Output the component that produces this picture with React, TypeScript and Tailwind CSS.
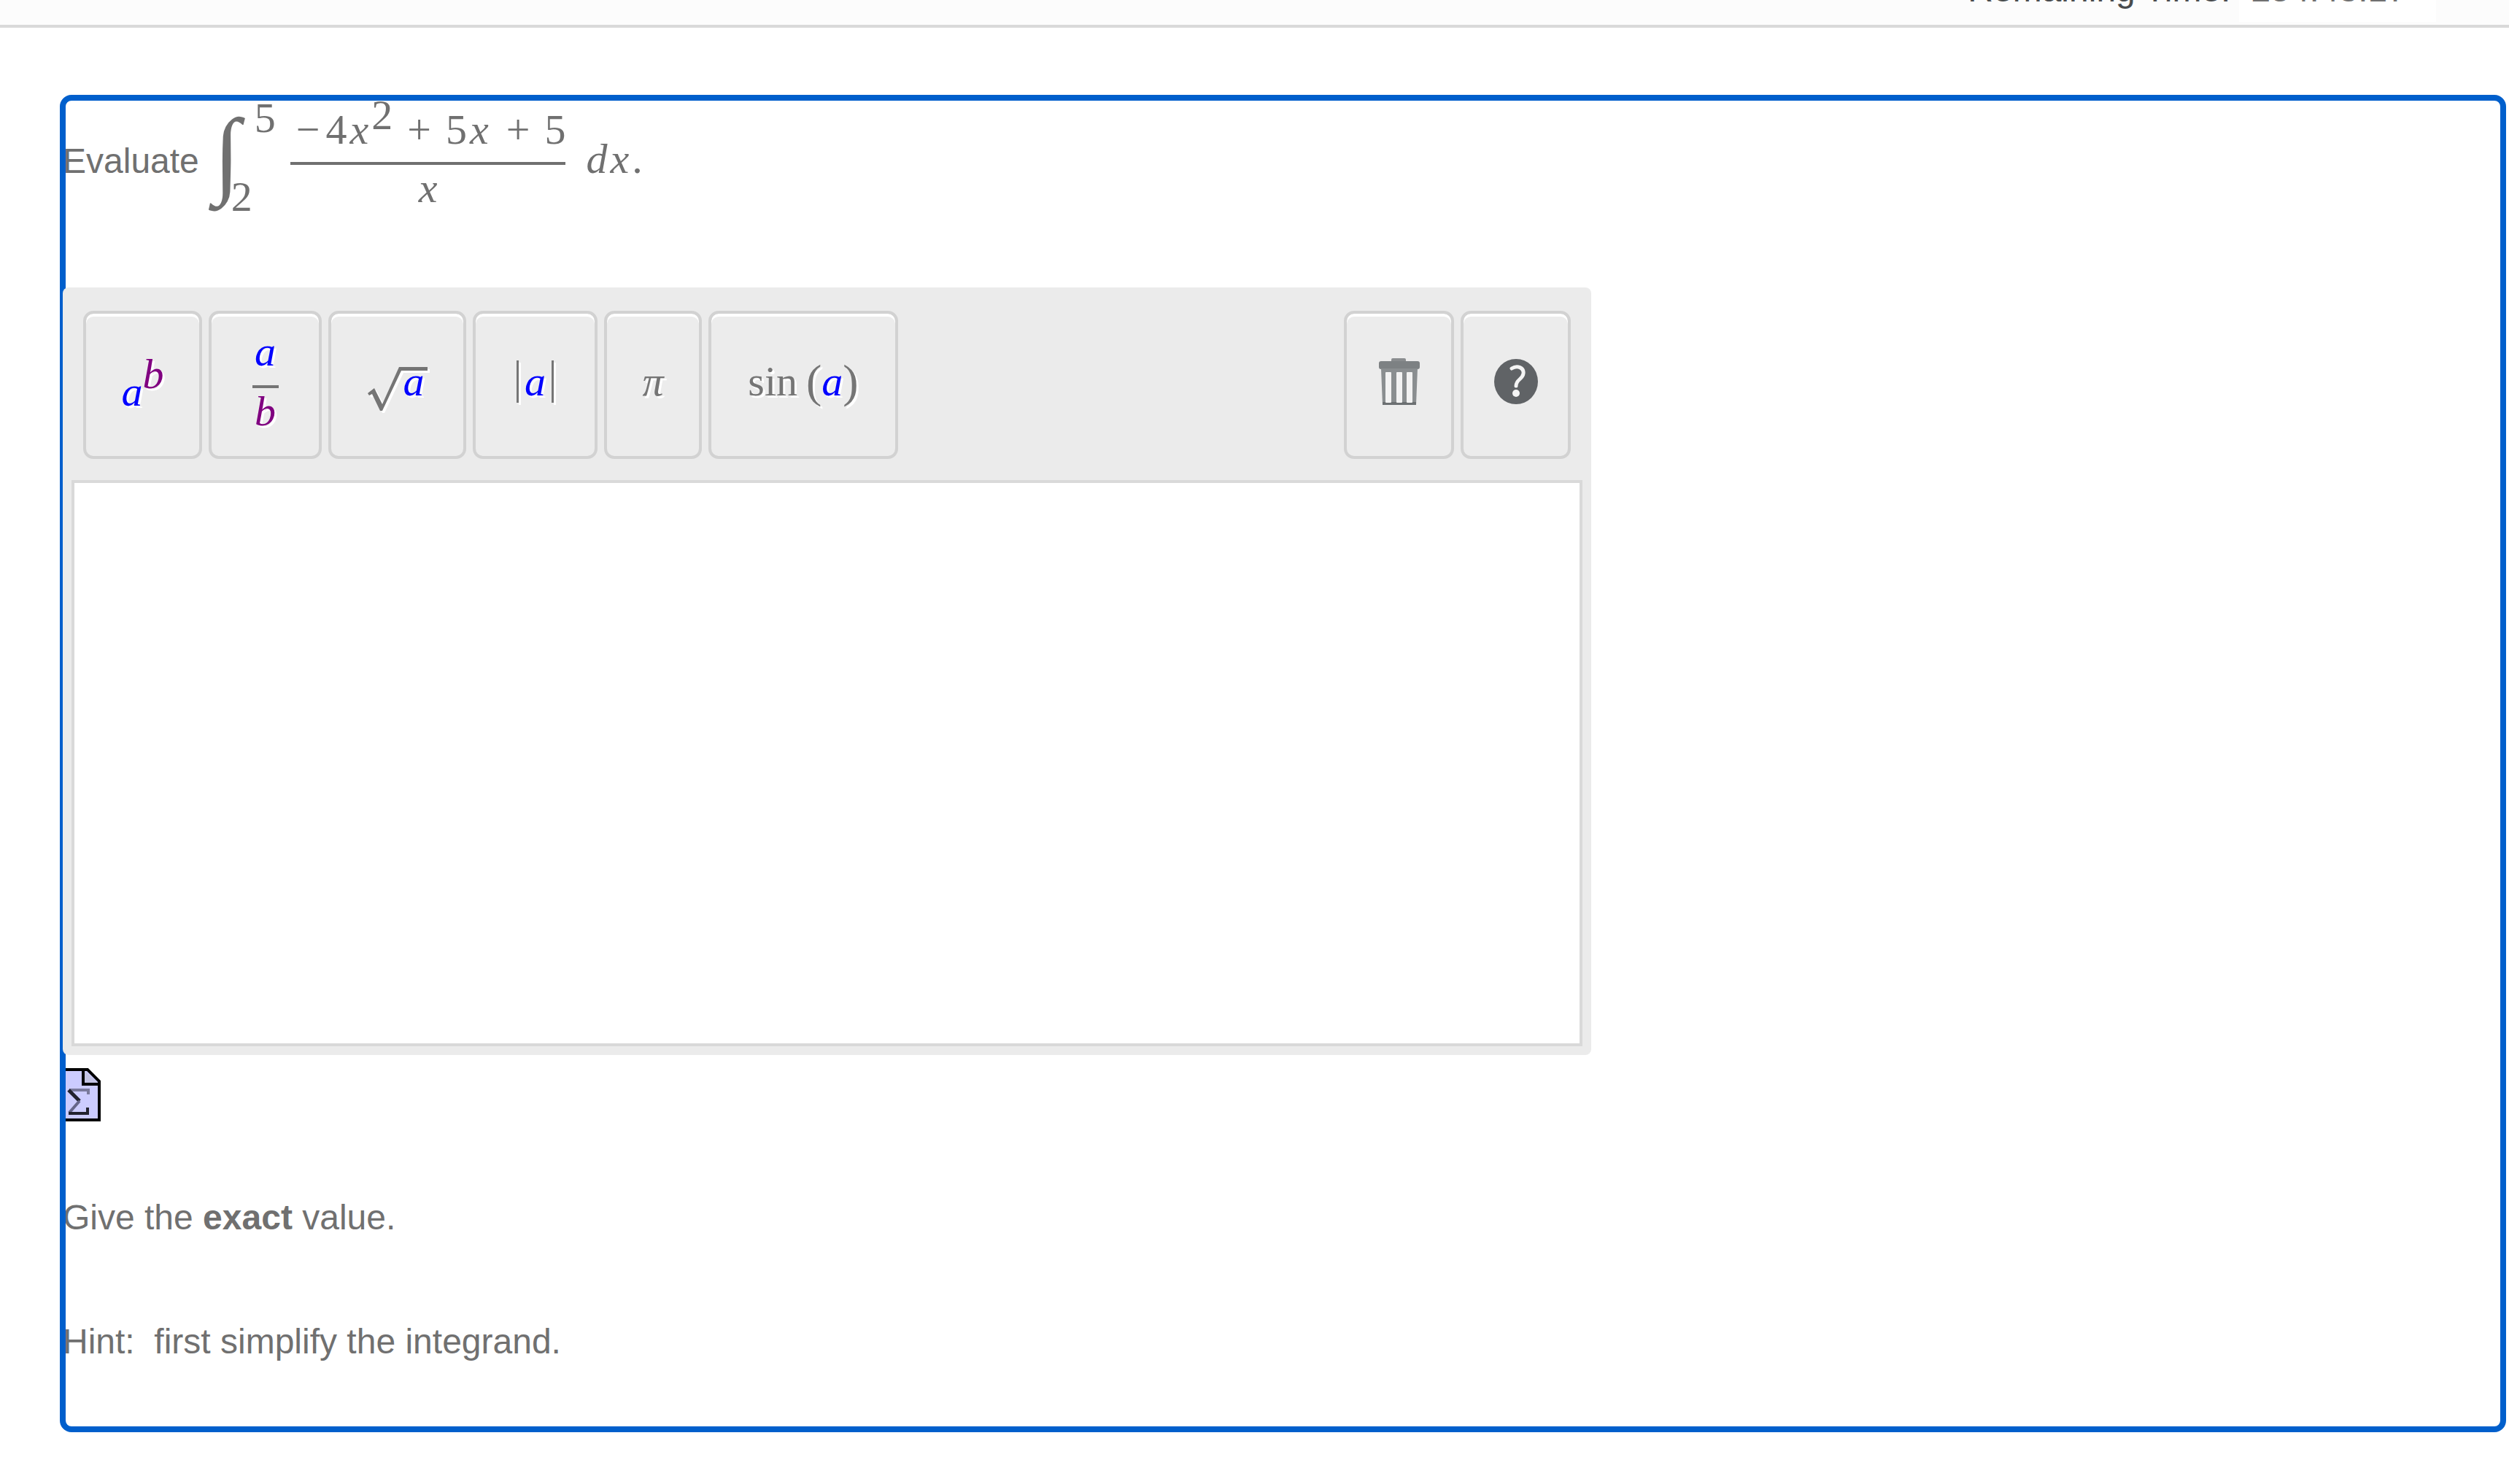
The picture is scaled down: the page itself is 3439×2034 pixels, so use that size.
import { useState } from 'react';
import type { ReactNode } from 'react';

const A = () => <i className="text-[#0000ff]">a</i>;
const B = () => <i className="text-[#800080]">b</i>;

function ToolButton({ label, width, onClick, children }: { label: string; width: string; onClick?: () => void; children: ReactNode }) {
  return (
    <button
      type="button"
      aria-label={label}
      onClick={onClick}
      className={`${width} h-[203px] flex items-center justify-center rounded-[14px] border-4 border-[#d2d2d2] bg-[#ececec] pb-[10px] shadow-[inset_0_4px_0_#fff] [text-shadow:3px_3px_0_#fff]`}
    >
      {children}
    </button>
  );
}

function RootSign() {
  return (
    <svg width="82" height="60" viewBox="0 0 82 60" fill="none" className="drop-shadow-[3px_3px_0_#fff]">
      <path d="M0 36 L9 29 L20 51 L43 0 H82 V5 H46 L20 60 H17 L6 37 L2 39 Z" fill="#757575" />
    </svg>
  );
}

function TrashIcon() {
  return (
    <svg width="56" height="64" viewBox="0 0 56 64">
      <rect x="17" y="0" width="20" height="6" rx="2" fill="#8a8d8f" />
      <rect x="0" y="4" width="56" height="11" rx="3" fill="#7d8183" />
      <path d="M3 14 H53 L51 64 H5 Z" fill="#8a8e90" />
      <path d="M5 60 H51 V64 H5 Z" fill="#6c7072" />
      <rect x="9" y="19" width="8" height="42" rx="1" fill="#f2f2f2" />
      <rect x="24" y="19" width="8" height="42" rx="1" fill="#f2f2f2" />
      <rect x="38" y="19" width="8" height="42" rx="1" fill="#f2f2f2" />
    </svg>
  );
}

function HelpIcon() {
  return (
    <svg width="60" height="62" viewBox="0 0 60 62" fill="none">
      <ellipse cx="30" cy="31" rx="30" ry="31" fill="#606366" />
      <path d="M24 13 C32 8 41 12 40 20 C39 28 30 28 30 37" stroke="#f4f4f4" strokeWidth="5" strokeLinecap="round" />
      <circle cx="30" cy="47" r="5" fill="#f4f4f4" />
    </svg>
  );
}

function EquationIcon() {
  return (
    <svg width="52" height="73" viewBox="0 0 52 73" fill="none" role="img" aria-label="Equation">
      <path d="M0 2 H34 L50 18 V71 H0 Z" fill="#ccccff" stroke="#000" strokeWidth="4" />
      <path d="M28 2 V22 H50" stroke="#000" strokeWidth="4" />
      <path d="M30 4 L48 20 H30 Z" fill="#c4c4e4" />
      <path d="M35 36 V30 H9" stroke="#7a7a9c" strokeWidth="4" />
      <path d="M8 30 L23 45" stroke="#22222e" strokeWidth="5" />
      <path d="M23 45 L9 61" stroke="#66668a" strokeWidth="4" />
      <path d="M8 62 H34 V54" stroke="#22222e" strokeWidth="4" />
    </svg>
  );
}

function Question() {
  return (
    <div className="flex h-[174px] items-start whitespace-nowrap">
      <span className="leading-[174px]">Evaluate</span>
      <div className="ml-5 flex items-start font-['Liberation_Serif',serif] text-[58px]">
        <i className="w-6 text-[132px] leading-[152px]">∫</i>
        <div className="flex flex-col gap-[52px] leading-[56px]">
          <span className="pl-8">5</span>
          <span>2</span>
        </div>
        <div className="ml-5 flex flex-col">
          <div className="flex pl-2 leading-[88px]">
            <span className="mr-2">−</span>
            <span>4</span>
            <i className="px-1">x</i>
            <span className="-mt-5">2</span>
            <span className="px-5">+</span>
            <span>5</span>
            <i className="px-1">x</i>
            <span className="px-5">+</span>
            <span>5</span>
          </div>
          <div className="h-1 bg-[#707070]" />
          <i className="text-center leading-[64px]">x</i>
        </div>
        <div className="ml-7 flex gap-1 leading-[168px]">
          <i>d</i>
          <i>x</i>
          <span>.</span>
        </div>
      </div>
    </div>
  );
}

function EquationEditor() {
  const [value, setValue] = useState('');

  return (
    <div className="relative z-10 mt-[86px] w-[2095px] max-w-full rounded-[8px] bg-[#ebebeb] px-3 pt-8 pb-3">
      <div className="flex justify-between px-4 font-['Liberation_Serif',serif] text-[58px] leading-[64px] text-[#757575]">
        <div className="flex gap-[9px]">
          <ToolButton label="Exponent" width="w-[163px]">
            <span className="pt-7"><A /></span>
            <span className="pb-5"><B /></span>
          </ToolButton>
          <ToolButton label="Fraction" width="w-[155px]">
            <span className="flex flex-col items-center">
              <A />
              <span className="mt-[14px] h-1 w-9 bg-[#757575]" />
              <B />
            </span>
          </ToolButton>
          <ToolButton label="Square root" width="w-[189px]">
            <span className="relative flex pt-5">
              <RootSign />
              <span className="absolute top-2 right-1"><A /></span>
            </span>
          </ToolButton>
          <ToolButton label="Absolute value" width="w-[171px]">
            <span className="mr-2 h-[58px] w-[3px] bg-[#757575] shadow-[3px_3px_0_#fff]" />
            <A />
            <span className="ml-2 h-[58px] w-[3px] bg-[#757575] shadow-[3px_3px_0_#fff]" />
          </ToolButton>
          <ToolButton label="Pi" width="w-[134px]"><i>π</i></ToolButton>
          <ToolButton label="Sine" width="w-[260px]">
            <span className="mr-3">sin</span>
            <span className="text-[64px]">(</span>
            <A />
            <span className="text-[64px]">)</span>
          </ToolButton>
        </div>
        <div className="flex gap-[9px]">
          <ToolButton label="Clear" width="w-[151px]" onClick={() => setValue('')}><TrashIcon /></ToolButton>
          <ToolButton label="Help" width="w-[151px]"><HelpIcon /></ToolButton>
        </div>
      </div>
      <textarea
        aria-label="Answer"
        value={value}
        onChange={(e) => setValue(e.target.value)}
        className="mt-[29px] block h-[776px] w-full resize-none border-4 border-[#d9d9d9] bg-white p-4 outline-none"
      />
    </div>
  );
}

function App() {
  return (
    <div className="min-h-screen bg-white font-['Liberation_Sans',Arial,sans-serif] text-[48px] leading-[72px] text-[#707070]">
      <header className="flex h-[38px] items-end justify-end overflow-hidden border-b-4 border-[#d9d9d9] bg-[#fcfcfc] pr-[100px] pb-1 leading-[88px]">
        <span className="text-[#494c4e]">Remaining Time:</span>
        <span className="ml-3 bg-white pr-10 pl-4">254:48:17</span>
      </header>
      <main className="mt-24 mr-2 ml-[86px] rounded-[12px] pb-[84px] outline-8 -outline-offset-4 outline-[#005fcc]">
        <Question />
        <EquationEditor />
        <div className="mt-[18px]"><EquationIcon /></div>
        <p className="mt-24">Give the <b>exact</b> value.</p>
        <p className="mt-[98px]">Hint: &nbsp;first simplify the integrand.</p>
      </main>
    </div>
  );
}

export default App;
